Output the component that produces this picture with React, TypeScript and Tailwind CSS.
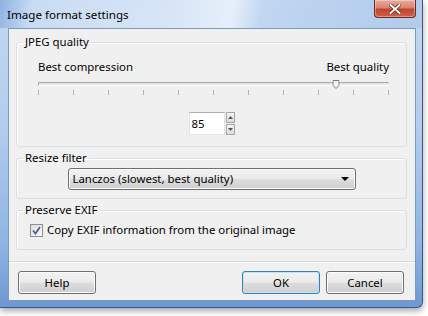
import React from 'react';

const ticks = Array.from({ length: 11 }, (_, i) => i);

function Legend({ children }: { children: React.ReactNode }) {
  return <legend className="ml-[6px] px-[2px] text-[11.4px] leading-[14px] text-black">{children}</legend>;
}

function Button({ label, isDefault }: { label: string; isDefault?: boolean }) {
  return (
    <button
      className={`w-[78px] h-[23px] rounded-[3px] border text-[11.4px] leading-[14px] text-black bg-[linear-gradient(180deg,#f2f2f2_0%,#ebebeb_48%,#dddddd_52%,#cfcfcf_100%)] ${
        isDefault
          ? 'border-[#3c7fb1] shadow-[inset_0_0_0_1px_#bfe3f7]'
          : 'border-[#707070] shadow-[inset_0_0_0_1px_#fcfcfc]'
      }`}
    >
      {label}
    </button>
  );
}

export default function App() {
  const quality = 85;

  return (
    <div className="w-[428px] h-[316px] bg-white overflow-hidden font-['Noto_Sans',sans-serif]">
      {/* Window frame */}
      <div className="w-[423px] h-[308px] flex flex-col pl-[8px] pr-[6px] pb-[6px] border-r border-b border-[#3b587c] rounded-br-[6px] bg-[linear-gradient(180deg,#c3d8f1_0%,#b3cdee_40%,#8fb4e3_80%,#6d98d3_100%)] shadow-[0_3px_6px_rgba(0,0,0,0.35)]">
        {/* Title bar */}
        <div className="h-[28px] flex items-start justify-between -ml-[8px] pl-[7px] -mr-[6px] bg-[linear-gradient(100deg,#8fb2e0_0%,#c9dcf3_8%,#d7e5f6_40%,#e6eff9_55%,#c0d6f1_62%,#b2cbec_100%)]">
          <span className="mt-[8px] text-[11.6px] leading-[14px] text-black">Image format settings</span>
          <div className="mr-[6px] w-[42px] h-[18px] flex items-center justify-center rounded-b-[4px] border border-t-0 border-[#6b2a20] bg-[linear-gradient(180deg,#e9a99b_0%,#d98472_45%,#c2442f_55%,#d2604a_100%)] shadow-[inset_0_0_0_1px_rgba(255,255,255,0.35)]">
            <svg width="12" height="10" viewBox="0 0 12 10">
              <path d="M1.5 1 L10.5 9 M10.5 1 L1.5 9" stroke="#5a1e14" strokeWidth="3.4" strokeLinecap="square" />
              <path d="M1.5 1 L10.5 9 M10.5 1 L1.5 9" stroke="#ffffff" strokeWidth="2" strokeLinecap="square" />
            </svg>
          </div>
        </div>

        {/* Client area */}
        <div className="flex-1 flex flex-col bg-[#f0f0f0] border border-[#7f99bb]">
          {/* JPEG quality */}
          <fieldset className="mt-[6px] ml-[7px] mr-[8px] h-[112px] border border-[#d5dfe5] rounded-[3px] shadow-[inset_1px_1px_0_#ffffff]">
            <Legend>JPEG quality</Legend>
            <div className="pt-[11px] pl-[21px] pr-[17px]">
              <div className="flex justify-between text-[11.4px] leading-[14px] text-black">
                <span>Best compression</span>
                <span>Best quality</span>
              </div>
              <div className="relative mt-[8px] h-[4px] border-t border-l border-[#a8a8a8] border-b border-b-white border-r border-r-[#e8e8e8] bg-[#e6e6e6]">
                <div className="absolute -top-[3px] -translate-x-1/2" style={{ left: `${quality}%` }}>
                  <svg width="7" height="9" viewBox="0 0 7 9">
                    <path d="M0.5 0.5 H6.5 V5.5 L3.5 8.5 L0.5 5.5 Z" fill="#f4f4f4" stroke="#7a7a7a" />
                  </svg>
                </div>
              </div>
              <div className="mt-[4px] flex justify-between">
                {ticks.map((t) => (
                  <div key={t} className="w-px h-[5px] bg-[#b4b4b4]" />
                ))}
              </div>
            </div>
            <div className="mt-[17px] flex justify-center">
              <div className="w-[36px] h-[23px] border border-[#abadb3] border-l-[#e2e3ea] border-r-[#dbdfe6] border-b-[#e3e9ef] bg-white text-[11.4px] leading-[21px] pl-[2px] text-black">
                {quality}
              </div>
              <div className="ml-[1px] w-[9px] h-[23px] flex flex-col gap-[1px]">
                <div className="flex-1 flex items-center justify-center border border-[#a7a7a7] bg-[linear-gradient(180deg,#f4f4f4,#dcdcdc)]">
                  <svg width="5" height="3" viewBox="0 0 5 3"><path d="M0 3 L2.5 0 L5 3 Z" fill="#555" /></svg>
                </div>
                <div className="flex-1 flex items-center justify-center border border-[#a7a7a7] bg-[linear-gradient(180deg,#f4f4f4,#dcdcdc)]">
                  <svg width="5" height="3" viewBox="0 0 5 3"><path d="M0 0 L2.5 3 L5 0 Z" fill="#555" /></svg>
                </div>
              </div>
            </div>
          </fieldset>

          {/* Resize filter */}
          <fieldset className="mt-[4px] ml-[7px] mr-[8px] pb-[8px] border border-[#d5dfe5] rounded-[3px] shadow-[inset_1px_1px_0_#ffffff]">
            <Legend>Resize filter</Legend>
            <div className="mt-[3px] flex justify-center">
              <div className="w-[288px] h-[22px] flex items-center justify-between pl-[4px] pr-[6px] rounded-[3px] border border-[#707070] bg-[linear-gradient(180deg,#f2f2f2_0%,#ebebeb_48%,#dddddd_52%,#cfcfcf_100%)] shadow-[inset_0_0_0_1px_#fbfbfb] text-[11.4px] leading-[14px] text-black">
                <span>Lanczos (slowest, best quality)</span>
                <svg width="8" height="4" viewBox="0 0 8 4"><path d="M0 0 H8 L4 4 Z" fill="#000" /></svg>
              </div>
            </div>
          </fieldset>

          {/* Preserve EXIF */}
          <fieldset className="mt-[4px] ml-[7px] mr-[8px] pb-[12px] border border-[#d5dfe5] rounded-[3px] shadow-[inset_1px_1px_0_#ffffff]">
            <Legend>Preserve EXIF</Legend>
            <div className="mt-[6px] ml-[13px] flex items-center gap-[4px]">
              <div className="w-[13px] h-[13px] border border-[#8e8f8f] bg-[linear-gradient(135deg,#dcdcdc,#fbfbfb)] flex items-center justify-center">
                <svg width="9" height="9" viewBox="0 0 9 9">
                  <path d="M1 4.5 L3.5 7.5 L8 1" fill="none" stroke="#4a5f97" strokeWidth="1.8" />
                </svg>
              </div>
              <span className="text-[11.4px] leading-[14px] text-black">Copy EXIF information from the original image</span>
            </div>
          </fieldset>

          {/* Separator */}
          <div className="mt-[11px] h-px bg-[#d5d5d5] border-b border-white box-content" />

          {/* Buttons */}
          <div className="mt-[8px] flex pl-[9px] pr-[11px]">
            <Button label="Help" />
            <div className="flex-1" />
            <div className="flex gap-[6px]">
              <Button label="OK" isDefault />
              <Button label="Cancel" />
            </div>
          </div>
        </div>
      </div>
    </div>
  );
}
